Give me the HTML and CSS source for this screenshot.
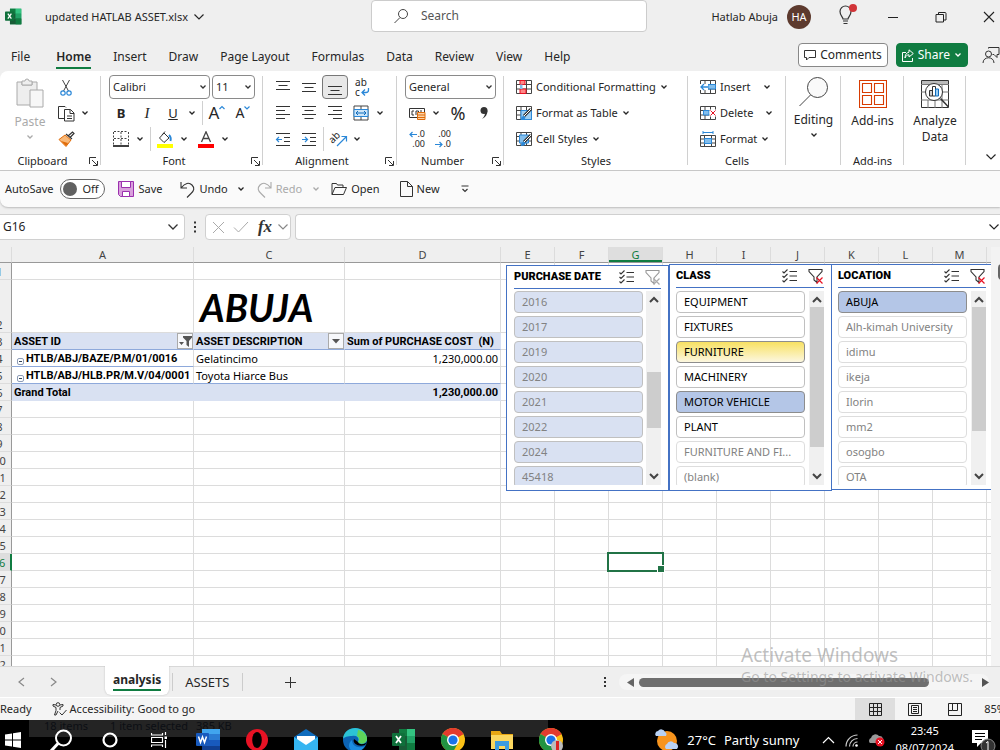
FILE: index.html
```html
<!DOCTYPE html>
<html lang="en">

<head>
    <meta charset="UTF-8">
    <meta name="viewport" content="width=device-width, initial-scale=1.0">
    <title>updated HATLAB ASSET.xlsx</title>
    <link rel="stylesheet" href="styles.css">
</head>

<body>
    <!-- shared icons -->
    <svg class="sprite" width="0" height="0" aria-hidden="true">
        <symbol id="chev" viewBox="0 0 8 6"><path d="M1.5 1.5 4 4l2.5-2.5" fill="none" stroke="currentColor" stroke-width="1.3"/></symbol>
        <symbol id="chev-big" viewBox="0 0 12 8"><path d="M1.5 1.5 6 6l4.5-4.5" fill="none" stroke="currentColor" stroke-width="1.2"/></symbol>
        <symbol id="launch" viewBox="0 0 9 9"><path d="M.5 7V.5H7M3 3l5 5M8.5 4v4.5H4" fill="none" stroke="#333"/></symbol>
        <symbol id="xl" viewBox="0 0 24 24">
            <path d="M7 1h16v22H7z" fill="#21a366"/><path d="M7 1h8v7H7z" fill="#107c41"/><path d="M15 1h8v7h-8z" fill="#33c481"/>
            <path d="M7 8h8v7H7z" fill="#185c37"/><path d="M15 8h8v7h-8z" fill="#21a366"/><path d="M7 15h16v8H7z" fill="#185c37"/><path d="M15 15h8v8h-8z" fill="#107c41"/>
            <rect x="0" y="5" width="13" height="13" rx="1" fill="#0f703b"/>
            <path d="m4 8 5 7M9 8l-5 7" stroke="#fff" stroke-width="1.8"/>
        </symbol>
        <symbol id="multi" viewBox="0 0 15 14"><path d="m.5 2.5 1.500 1.500L5.500.5M.5 7l1.500 1.500L5.500 5M.5 11.500 2 13l3.500-3.500M7.500 2.500H15M7.500 7H15M7.500 11.500H15" fill="none" stroke="#333" stroke-width="1.1"/></symbol>
        <symbol id="funnel" viewBox="0 0 16 15"><path d="M1 .5h13v2L9 8v5.500L6 11V8L1 2.500z" fill="none" stroke="currentColor" stroke-width="1.1"/><path d="m8.500 8.500 6 6M14.500 8.500l-6 6" stroke="var(--funnel-x, #e81123)" stroke-width="1.2"/></symbol>
        <symbol id="chrome" viewBox="0 0 24 24">
            <circle cx="12" cy="12" r="12" fill="#fbc116"/>
            <path d="M12 12 1.600 6A12 12 0 0 1 22.400 6z" fill="#e33b2e"/>
            <path d="M12 12 22.400 6H12z" fill="#e33b2e"/>
            <path d="M12 12 1.600 6A12 12 0 0 0 12 24l5-9z" fill="#229342"/>
            <circle cx="12" cy="12" r="6" fill="#fff"/><circle cx="12" cy="12" r="4.600" fill="#1a73e8"/>
        </symbol>
        <symbol id="tbl" viewBox="0 0 16 16"><path d="M.5 1.500h15v13H.5zM.5 5.500h15M.5 10h15M5 1.500v13M10.500 1.500v13" fill="#fff" stroke="#444"/></symbol>
    </svg>

    <header class="titlebar">
        <div class="title-left">
            <svg width="17" height="17"><use href="#xl"/></svg>
            <button class="file-name">updated HATLAB ASSET.xlsx <svg width="12" height="8"><use href="#chev-big"/></svg></button>
        </div>
        <label class="search">
            <svg width="16" height="16" viewBox="0 0 16 16"><circle cx="10" cy="6" r="4.500" fill="none" stroke="#444"/><path d="m7 9.500-5.500 5.500" stroke="#444"/></svg>
            <input type="text" placeholder="Search" aria-label="Search">
        </label>
        <div class="title-right">
            <span>Hatlab Abuja</span>
            <button class="avatar">HA</button>
            <button class="bulb" aria-label="Tips">
                <svg width="20" height="22" viewBox="0 0 20 22"><path d="M6 15c0-2-3-3.500-3-7.500a5.500 5.500 0 0 1 11 0c0 4-3 5.500-3 7.500zM6 17h5M6.500 19.500h4" fill="none" stroke="#333" stroke-width="1.200"/><circle cx="16" cy="4" r="4" fill="#d13438"/></svg>
            </button>
            <button class="win" aria-label="Minimize"><svg width="12" height="12" viewBox="0 0 12 12"><path d="M1 6.500h10" stroke="#222"/></svg></button>
            <button class="win" aria-label="Restore"><svg width="12" height="12" viewBox="0 0 12 12"><path d="M1 3.500h7.500V11H1zM3.500 3.500V1.500H10a1 1 0 0 1 1 1v6.500H8.500" fill="none" stroke="#222"/></svg></button>
            <button class="win" aria-label="Close"><svg width="12" height="12" viewBox="0 0 12 12"><path d="m1 1 10 10M11 1 1 11" stroke="#222" stroke-width="1.100"/></svg></button>
        </div>
    </header>

    <nav class="tabs">
        <button>File</button>
        <button class="active">Home</button>
        <button>Insert</button>
        <button>Draw</button>
        <button>Page Layout</button>
        <button>Formulas</button>
        <button>Data</button>
        <button>Review</button>
        <button>View</button>
        <button>Help</button>
        <div class="tab-actions">
            <button class="comments"><svg width="12" height="12" viewBox="0 0 12 12"><path d="M.5 1.500h11v7H5L2.500 11V8.500h-2z" fill="none" stroke="#333"/></svg>Comments</button>
            <button class="share"><svg width="12" height="13" viewBox="0 0 12 13"><path d="M4 3.500H.5v9h10V9M7 .8l4.300 3.700L7 8V5.800C5 5.800 3.800 7 3 9c0-3 1.500-5.500 4-5.800z" fill="none" stroke="#fff"/></svg>Share <svg width="8" height="6"><use href="#chev"/></svg></button>
            <button class="people" aria-label="Account"><svg width="18" height="18" viewBox="0 0 18 18"><circle cx="6.500" cy="8" r="3" fill="none" stroke="#333"/><path d="M1 17c0-7 11-7 11 0M6.500 2.500v-1H17v7h-2v3L12 8.500h-1.500" fill="none" stroke="#333"/></svg></button>
        </div>
    </nav>

    <section class="ribbon">
        <div class="group clipboard">
            <div class="clip-body">
                <button class="big disabled">
                    <svg width="28" height="32" viewBox="0 0 28 32"><path d="M1 5h5v3h10V5h5v23H1z" fill="#eee" stroke="#aaa"/><path d="M6 8V4h3a2 2 0 0 1 4 0h3v4z" fill="#eee" stroke="#aaa"/><path d="M14 13h13v17H14z" fill="#f7f7f7" stroke="#aaa"/></svg>
                    Paste
                    <svg width="8" height="6"><use href="#chev"/></svg>
                </button>
                <div class="clip-tools">
                    <div class="row"><button class="ic" aria-label="Cut"><svg width="12" height="17" viewBox="0 0 12 17"><path d="M2.500 1 8.500 12M9.500 1l-6 11" stroke="#444" fill="none"/><circle cx="3" cy="14" r="2.200" fill="none" stroke="#2b88d8" stroke-width="1.200"/><circle cx="9" cy="14" r="2.200" fill="none" stroke="#2b88d8" stroke-width="1.200"/></svg></button></div>
                    <div class="row"><button class="ic" aria-label="Copy"><svg width="17" height="17" viewBox="0 0 17 17"><path d="M6 13.500H.5v-12H7l1 1M6.500 4.500h6L16 8v8H6.500zM12 4.500V8.500h4M9 11h5M9 13.500h5" fill="none" stroke="#333"/></svg></button><button class="dd" aria-label="Copy options"><svg width="8" height="6"><use href="#chev"/></svg></button></div>
                    <div class="row"><button class="ic" aria-label="Format painter"><svg width="17" height="16" viewBox="0 0 17 16"><path d="m7 4 6 5-5 6.500L1 8.500z" fill="#f8b878" stroke="#e06c0a"/><path d="m3 10 5 5 2-3z" fill="#e06c0a"/><path d="m8 3 6 5M10 5l4.500-4 1.500 1.500L12 6.500" fill="#fff" stroke="#333" stroke-width="1.200"/></svg></button></div>
                </div>
            </div>
            <div class="g-label">Clipboard<svg width="9" height="9"><use href="#launch"/></svg></div>
        </div>

        <div class="group font">
            <div class="row">
                <select class="font-name" aria-label="Font"><option>Calibri</option></select>
                <select class="font-size" aria-label="Font size"><option>11</option></select>
            </div>
            <div class="row">
                <button class="ic bold">B</button><button class="ic italic">I</button><button class="ic under">U</button><button class="dd" aria-label="Underline options"><svg width="8" height="6"><use href="#chev"/></svg></button>
                <i class="sep"></i>
                <button class="ic" aria-label="Increase font size"><span class="grow">A</span><svg width="6" height="12" viewBox="0 0 6 12"><path d="m.5 4 2.500-2.500L5.500 4" fill="none" stroke="#2b88d8" stroke-width="1.200"/></svg></button>
                <button class="ic" aria-label="Decrease font size"><span class="shrink">A</span><svg width="6" height="12" viewBox="0 0 6 12"><path d="m.5 1.500 2.500 2.500 2.500-2.500" fill="none" stroke="#2b88d8" stroke-width="1.200"/></svg></button>
            </div>
            <div class="row">
                <button class="ic" aria-label="Borders"><svg width="16" height="16" viewBox="0 0 16 16"><path d="M1 .5h14M.5 1v13M15.500 1v13M8 1v13M1 7.500h14" stroke="#444" stroke-dasharray="2 1.500" fill="none"/><path d="M0 15h16" stroke="#000" stroke-width="1.500"/></svg></button><button class="dd" aria-label="Border options"><svg width="8" height="6"><use href="#chev"/></svg></button>
                <i class="sep"></i>
                <button class="ic" aria-label="Fill colour"><svg width="16" height="17" viewBox="0 0 16 17"><path d="m7 2 5 5-5 4.500L2.500 7zM5 4l3-3.500" fill="#fff" stroke="#333"/><path d="M12 4c2 2 2.500 3 1.500 6" stroke="#2b88d8" fill="none" stroke-width="1.800"/><path d="M0 13h16v4H0z" fill="#ff0"/></svg></button><button class="dd" aria-label="Fill options"><svg width="8" height="6"><use href="#chev"/></svg></button>
                <i class="gap"></i>
                <button class="ic" aria-label="Font colour"><svg width="16" height="17" viewBox="0 0 16 17"><path d="M3.500 11 8 .8 12.500 11M5 7.500h6" fill="none" stroke="#444" stroke-width="1.300"/><path d="M0 13h16v4H0z" fill="#f00"/></svg></button><button class="dd" aria-label="Font colour options"><svg width="8" height="6"><use href="#chev"/></svg></button>
            </div>
            <div class="g-label">Font<svg width="9" height="9"><use href="#launch"/></svg></div>
        </div>

        <div class="group align">
            <div class="row">
                <button class="ic" aria-label="Top align"><svg width="16" height="16" viewBox="0 0 16 16"><path d="M1 2.500h14M3.500 6.500h9M1 10.500h14" stroke="#333"/></svg></button>
                <button class="ic" aria-label="Middle align"><svg width="16" height="16" viewBox="0 0 16 16"><path d="M1 4.500h14M3.500 8.500h9M1 12.500h14" stroke="#333"/></svg></button>
                <button class="ic pressed" aria-label="Bottom align"><svg width="16" height="16" viewBox="0 0 16 16"><path d="M1 7.500h14M3.500 11.500h9M1 15.500h14" stroke="#333"/></svg></button>
                <button class="ic" aria-label="Wrap text"><span class="wrap">ab<br>c</span><svg class="wrap-arrow" width="9" height="8" viewBox="0 0 9 8"><path d="M7.500 0v2Q7.500 4.500 5 4.500H1M4 1.500l-3 3 3 3" fill="none" stroke="#2b88d8" stroke-width="1.300"/></svg></button>
            </div>
            <div class="row">
                <button class="ic" aria-label="Align left"><svg width="16" height="16" viewBox="0 0 16 16"><path d="M1 1.500h14M1 5.500h9M1 9.500h14M1 13.500h9" stroke="#333"/></svg></button>
                <button class="ic" aria-label="Center"><svg width="16" height="16" viewBox="0 0 16 16"><path d="M1 1.500h14M3.500 5.500h9M1 9.500h14M3.500 13.500h9" stroke="#333"/></svg></button>
                <button class="ic" aria-label="Align right"><svg width="16" height="16" viewBox="0 0 16 16"><path d="M1 1.500h14M6 5.500h9M1 9.500h14M6 13.500h9" stroke="#333"/></svg></button>
                <button class="ic" aria-label="Merge"><svg width="16" height="16" viewBox="0 0 16 16"><path d="M1 1h14v14H1zM8 1v14" fill="#fff" stroke="#444"/><path d="M1 4.500h14v7H1z" fill="#cfe6f8" stroke="#2b88d8"/><path d="M3 8h10M5 6 3 8l2 2M11 6l2 2-2 2" fill="none" stroke="#0f6cbd"/></svg></button><button class="dd" aria-label="Merge options"><svg width="8" height="6"><use href="#chev"/></svg></button>
            </div>
            <div class="row">
                <button class="ic" aria-label="Decrease indent"><svg width="16" height="16" viewBox="0 0 16 16"><path d="M1 2.500h14M9 6.500h6M9 10.500h6M1 14.500h14" stroke="#333"/><path d="M7 8.500H1.500M4 6 1.500 8.500 4 11" fill="none" stroke="#2b88d8" stroke-width="1.200"/></svg></button>
                <button class="ic" aria-label="Increase indent"><svg width="16" height="16" viewBox="0 0 16 16"><path d="M1 2.500h14M9 6.500h6M9 10.500h6M1 14.500h14" stroke="#333"/><path d="M1 8.500h5.500M4 6l2.500 2.500L4 11" fill="none" stroke="#2b88d8" stroke-width="1.200"/></svg></button>
                <i class="sep tight"></i>
                <button class="ic" aria-label="Orientation"><span class="orient">ab</span><svg width="12" height="12" viewBox="0 0 12 12"><path d="M1 11 10 2M5.500 1.500h5v5" fill="none" stroke="#2b88d8" stroke-width="1.200"/></svg></button><button class="dd" aria-label="Orientation options"><svg width="8" height="6"><use href="#chev"/></svg></button>
            </div>
            <div class="g-label">Alignment<svg width="9" height="9"><use href="#launch"/></svg></div>
        </div>

        <div class="group number">
            <div class="row"><select class="num-format" aria-label="Number format"><option>General</option></select></div>
            <div class="row">
                <button class="ic" aria-label="Accounting format"><svg width="17" height="16" viewBox="0 0 17 16"><path d="M.5 3.500h15v9H.5z" fill="#fff" stroke="#333"/><path d="M5 6H3v4h2M7 10V6h2.500v4M13 6h-2" fill="none" stroke="#333"/><path d="M8.500 7.500h7.500v7H8.500z" fill="#fbd3a8" stroke="#e06c0a"/><path d="M8.500 10h7.500M8.500 12.500h7.500" stroke="#e06c0a"/></svg></button><button class="dd" aria-label="Accounting options"><svg width="8" height="6"><use href="#chev"/></svg></button>
                <i class="gap"></i>
                <button class="ic percent">%</button><button class="ic" aria-label="Comma style"><svg width="10" height="14" viewBox="0 0 10 14"><circle cx="5" cy="4.500" r="3.500" fill="#333"/><path d="M8.500 4.500c0 4-2 7-5.500 8.500 2-2 3-4 3-6z" fill="#333"/></svg></button>
            </div>
            <div class="row">
                <button class="ic dec" aria-label="Increase decimal"><span><svg width="8" height="7" viewBox="0 0 8 7"><path d="M8 3.500H1M3.500 1 1 3.500 3.500 6" fill="none" stroke="#2b88d8" stroke-width="1.200"/></svg>.0</span><span>.00</span></button>
                <button class="ic dec" aria-label="Decrease decimal"><span>.00</span><span><svg width="8" height="7" viewBox="0 0 8 7"><path d="M0 3.500h7M4.500 1 7 3.500 4.500 6" fill="none" stroke="#2b88d8" stroke-width="1.200"/></svg>.0</span></button>
            </div>
            <div class="g-label">Number<svg width="9" height="9"><use href="#launch"/></svg></div>
        </div>

        <div class="group styles">
            <div class="row"><button class="cmd"><svg width="16" height="16" viewBox="0 0 16 16"><use href="#tbl"/><path d="M4 1.500h5v4H4zM4 10h6v4.500H4z" fill="#f88" stroke="#e81123"/><path d="M4 5.500h2.500V10H4z" fill="#83beec"/></svg>Conditional Formatting <svg width="8" height="6"><use href="#chev"/></svg></button></div>
            <div class="row"><button class="cmd"><svg width="16" height="16" viewBox="0 0 16 16"><use href="#tbl"/><path d="M5 5.500h10.500v9H5z" fill="#9ccdf2" stroke="#2b88d8"/><path d="m15 4-7 7" stroke="#333" stroke-width="3"/><path d="m15 4-7 7" stroke="#fff"/><path d="M5 15q0-4 3-4l1.500 1.500Q9 15 5 15" fill="#2b88d8"/></svg>Format as Table <svg width="8" height="6"><use href="#chev"/></svg></button></div>
            <div class="row"><button class="cmd"><svg width="16" height="16" viewBox="0 0 16 16"><use href="#tbl"/><path d="M3.500 4h9v8h-9z" fill="#83beec" stroke="#2b88d8"/><path d="m15 4-7 7" stroke="#333" stroke-width="3"/><path d="m15 4-7 7" stroke="#fff"/><path d="M5 15q0-4 3-4l1.500 1.500Q9 15 5 15" fill="#2b88d8"/></svg>Cell Styles <svg width="8" height="6"><use href="#chev"/></svg></button></div>
            <div class="g-label">Styles</div>
        </div>

        <div class="group cells">
            <div class="row"><button class="cmd"><svg width="16" height="16" viewBox="0 0 16 16"><use href="#tbl"/><path d="M8 5.500h7.500V10H8z" fill="#83beec" stroke="#2b88d8"/><path d="M0 5h8v6H0z" fill="#fff"/><path d="M8 8H1M4 5 1 8l3 3" fill="none" stroke="#2b88d8" stroke-width="1.300"/></svg>Insert <svg class="far" width="8" height="6"><use href="#chev"/></svg></button></div>
            <div class="row"><button class="cmd"><svg width="16" height="16" viewBox="0 0 16 16"><use href="#tbl"/><path d="M3.500 5.500H9V10H3.500z" fill="#83beec" stroke="#2b88d8"/><path d="M9.500 4.500H16v7H9.500z" fill="#fff"/><path d="m10.500 5.500 5 5M15.500 5.500l-5 5" stroke="#e81123"/></svg>Delete <svg class="far" width="8" height="6"><use href="#chev"/></svg></button></div>
            <div class="row"><button class="cmd"><svg width="16" height="16" viewBox="0 0 16 16"><path d="M.5 4.500h15v11H.5zM.5 8h15M.5 12h15M4.500 4.500v11M11.500 4.500v11" fill="#fff" stroke="#444"/><path d="M4.500 7.500h7v5h-7z" fill="#83beec" stroke="#2b88d8"/><path d="M3 1.500h10M3 0v3M13 0v3" stroke="#2b88d8"/></svg>Format <svg width="8" height="6"><use href="#chev"/></svg></button></div>
            <div class="g-label">Cells</div>
        </div>

        <div class="group editing">
            <button class="big">
                <svg width="30" height="30" viewBox="0 0 30 30"><circle cx="18.500" cy="10.500" r="10" fill="#fafafa" stroke="#444"/><path d="M11.500 18 .5 29" stroke="#444"/></svg>
                Editing
                <svg width="8" height="6"><use href="#chev"/></svg>
            </button>
        </div>
        <div class="group addins">
            <button class="big">
                <svg width="28" height="28" viewBox="0 0 28 28"><path d="M.5.5h27v27H.5zM3.500 3.500h9v9h-9zM15.500 3.500h9v9h-9zM3.500 15.500h9v9h-9zM15.500 15.500h9v9h-9z" fill="none" stroke="#d83b01" stroke-width="1.100"/></svg>
                Add-ins
            </button>
            <div class="g-label">Add-ins</div>
        </div>
        <div class="group analyze">
            <button class="big">
                <svg width="28" height="28" viewBox="0 0 28 28"><path d="M.5.5h27v27H.5z" fill="#fff" stroke="#333"/><path d="M1 1h26v3H1z" fill="#bbb"/><path d="M0 4.500h28M0 12h28M0 20h28M7 20v8M14 20v8M21 4v24" stroke="#777"/><circle cx="13" cy="12" r="8.500" fill="#fff" stroke="#333"/><path d="m19.500 18.500 8 8.500" stroke="#333" stroke-width="1.500"/><path d="M8.500 10.500h3V16h-3z" fill="#ccc" stroke="#333"/><path d="M11.500 6.500h3V16h-3z" fill="#fff" stroke="#333"/><path d="M14.500 9h3v7h-3z" fill="#9ccdf2" stroke="#0f6cbd"/></svg>
                Analyze<br>Data
            </button>
        </div>
        <button class="collapse" aria-label="Collapse ribbon"><svg width="12" height="8"><use href="#chev-big"/></svg></button>
    </section>

    <section class="qat">
        <label class="autosave">AutoSave <span class="toggle"><input type="checkbox" role="switch"><i></i>Off</span></label>
        <button class="save"><svg width="16" height="16" viewBox="0 0 16 16"><path d="M.5.5h15v15h-13l-2-2z" fill="#d9a0dc" stroke="#9b2fae"/><path d="M3.500.5h9v6h-9zM4.500 10.500h7v5h-7z" fill="#fff" stroke="#9b2fae"/></svg>Save</button>
        <button class="undo"><svg width="15" height="17" viewBox="0 0 15 17"><path d="M1 1v6h6M1.500 6.500C5 2 9 1 12 4s2 6-1 8.500L7 16.500" fill="none" stroke="#333" stroke-width="1.100"/></svg>Undo</button>
        <button class="dd" aria-label="Undo options"><svg width="8" height="6"><use href="#chev"/></svg></button>
        <button class="redo disabled"><svg width="15" height="17" viewBox="0 0 15 17"><path d="M14 1v6H8M13.500 6.500C10 2 6 1 3 4s-2 6 1 8.500l4 4" fill="none" stroke="#aaa" stroke-width="1.100"/></svg>Redo</button>
        <button class="dd disabled" aria-label="Redo options"><svg width="8" height="6"><use href="#chev"/></svg></button>
        <button class="open"><svg width="16" height="12" viewBox="0 0 16 12"><path d="M1 11.500V.5h4.500l1 1.500H12v2.500M1 11.500 4 4.500h11.500l-3 7z" fill="none" stroke="#333"/></svg>Open</button>
        <button class="new"><svg width="13" height="16" viewBox="0 0 13 16"><path d="M.5.5h7l5 5v10H.5zM7.500.5v5h5" fill="none" stroke="#333"/></svg>New</button>
        <button class="custom" aria-label="Customize toolbar"><svg width="8" height="8" viewBox="0 0 8 8"><path d="M.5 1h7M1.500 4 4 6.500 6.500 4" fill="none" stroke="#333" stroke-width="1.200"/></svg></button>
    </section>

    <section class="formula-bar">
        <select class="name-box" aria-label="Name box"><option>G16</option></select>
        <svg width="4" height="14" viewBox="0 0 4 14"><path d="M1 1.500h2v2H1zM1 6h2v2H1zM1 10.500h2v2H1z" fill="#333"/></svg>
        <div class="fx">
            <button aria-label="Cancel"><svg width="13" height="13" viewBox="0 0 13 13"><path d="m1 1 11 11M12 1 1 12" stroke="#aaa"/></svg></button>
            <button aria-label="Enter"><svg width="16" height="12" viewBox="0 0 16 12"><path d="m1 6.500 4.500 4.500L15 1" fill="none" stroke="#aaa"/></svg></button>
            <button class="fx-btn">fx</button>
            <button aria-label="Function list"><svg width="12" height="8"><use href="#chev-big"/></svg></button>
        </div>
        <div class="formula">
            <input type="text" aria-label="Formula">
            <button aria-label="Expand formula bar"><svg width="12" height="8"><use href="#chev-big"/></svg></button>
        </div>
    </section>

    <main class="work">
        <div class="sheet">
            <table id="grid">
                <colgroup>
                    <col class="w-head"><col class="w-a"><col class="w-c"><col class="w-d">
                    <col span="10" class="w-std">
                </colgroup>
                <thead>
                    <tr><th class="corner"></th><th>A</th><th>C</th><th>D</th><th>E</th><th>F</th><th class="sel">G</th><th>H</th><th>I</th><th>J</th><th>K</th><th>L</th><th>M</th><th></th></tr>
                </thead>
                <tbody>
                    <tr><th>1</th></tr>
                    <tr class="title-row"><th>2</th><td></td><td class="city">ABUJA</td></tr>
                    <tr class="pivot-head">
                        <th>3</th>
                        <td><div>ASSET ID<button class="filter" aria-label="Filter asset ID"><svg width="13" height="11" viewBox="0 0 13 11"><path d="M4 0h9v1.500L10 5v6L7.500 9V5L4 1.500zM0 6h5L2.500 9z" fill="#555"/></svg></button></div></td>
                        <td><div>ASSET DESCRIPTION<button class="filter" aria-label="Filter description"><svg width="8" height="5" viewBox="0 0 8 5"><path d="M0 0h8L4 4.500z" fill="#555"/></svg></button></div></td>
                        <td>Sum of PURCHASE COST&nbsp; (N)</td>
                    </tr>
                    <tr><th>4</th><td class="asset"><button class="minus" aria-label="Collapse"></button>HTLB/ABJ/BAZE/P.M/01/0016</td><td>Gelatincimo</td><td class="num">1,230,000.00</td></tr>
                    <tr class="last"><th>5</th><td class="asset"><button class="minus" aria-label="Collapse"></button>HTLB/ABJ/HLB.PR/M.V/04/0001</td><td>Toyota Hiarce Bus</td><td></td></tr>
                    <tr class="total"><th>6</th><td>Grand Total</td><td></td><td class="num">1,230,000.00</td></tr>
                </tbody>
            </table>

            <div class="slicer s-date">
                <div class="s-head"><b>PURCHASE DATE</b><button aria-label="Multi-select"><svg width="15" height="14"><use href="#multi"/></svg></button><button class="clear off" aria-label="Clear filter"><svg width="16" height="15"><use href="#funnel"/></svg></button></div>
                <div class="s-body">
                    <div class="s-list">
                        <button class="soft">2016</button><button class="soft">2017</button><button class="soft">2019</button><button class="soft">2020</button>
                        <button class="soft">2021</button><button class="soft">2022</button><button class="soft">2024</button><button class="soft">45418</button>
                    </div>
                    <div class="s-bar"><svg width="10" height="7" viewBox="0 0 10 7"><path d="M1 6l4-4 4 4" fill="none" stroke="#444" stroke-width="2"/></svg><i></i><svg width="10" height="7" viewBox="0 0 10 7"><path d="M1 1l4 4 4-4" fill="none" stroke="#444" stroke-width="2"/></svg></div>
                </div>
            </div>
            <div class="slicer s-class">
                <div class="s-head"><b>CLASS</b><button aria-label="Multi-select"><svg width="15" height="14"><use href="#multi"/></svg></button><button class="clear" aria-label="Clear filter"><svg width="16" height="15"><use href="#funnel"/></svg></button></div>
                <div class="s-body">
                    <div class="s-list">
                        <button>EQUIPMENT</button><button>FIXTURES</button><button class="hover">FURNITURE</button><button>MACHINERY</button>
                        <button class="on">MOTOR VEHICLE</button><button>PLANT</button><button class="none">FURNITURE AND FI...</button><button class="none">(blank)</button>
                    </div>
                    <div class="s-bar"><svg width="10" height="7" viewBox="0 0 10 7"><path d="M1 6l4-4 4 4" fill="none" stroke="#444" stroke-width="2"/></svg><i></i><svg width="10" height="7" viewBox="0 0 10 7"><path d="M1 1l4 4 4-4" fill="none" stroke="#444" stroke-width="2"/></svg></div>
                </div>
            </div>
            <div class="slicer s-location">
                <div class="s-head"><b>LOCATION</b><button aria-label="Multi-select"><svg width="15" height="14"><use href="#multi"/></svg></button><button class="clear" aria-label="Clear filter"><svg width="16" height="15"><use href="#funnel"/></svg></button></div>
                <div class="s-body">
                    <div class="s-list">
                        <button class="on">ABUJA</button><button class="none">Alh-kimah University</button><button class="none">idimu</button><button class="none">ikeja</button>
                        <button class="none">Ilorin</button><button class="none">mm2</button><button class="none">osogbo</button><button class="none">OTA</button>
                    </div>
                    <div class="s-bar"><svg width="10" height="7" viewBox="0 0 10 7"><path d="M1 6l4-4 4 4" fill="none" stroke="#444" stroke-width="2"/></svg><i></i><svg width="10" height="7" viewBox="0 0 10 7"><path d="M1 1l4 4 4-4" fill="none" stroke="#444" stroke-width="2"/></svg></div>
                </div>
            </div>
        </div>
        <div class="v-scroll"><i></i></div>
    </main>

    <section class="sheet-tabs">
        <button class="nav" aria-label="Previous sheet"><svg width="8" height="10" viewBox="0 0 8 10"><path d="M7 1 2 5l5 4" fill="none" stroke="#888" stroke-width="1.200"/></svg></button>
        <button class="nav" aria-label="Next sheet"><svg width="8" height="10" viewBox="0 0 8 10"><path d="m1 1 5 4-5 4" fill="none" stroke="#888" stroke-width="1.200"/></svg></button>
        <button class="tab active"><span>analysis</span></button>
        <button class="tab">ASSETS</button>
        <button class="add" aria-label="New sheet"><svg width="11" height="11" viewBox="0 0 11 11"><path d="M0 5.500h11M5.500 0v11" stroke="#333"/></svg></button>
        <svg class="dots" width="4" height="12" viewBox="0 0 4 12"><path d="M1 1h2v2H1zM1 5h2v2H1zM1 9h2v2H1z" fill="#333"/></svg>
        <div class="h-scroll">
            <svg width="7" height="9" viewBox="0 0 7 9"><path d="M7 0v9L0 4.500z" fill="#666"/></svg>
            <i></i>
            <svg width="7" height="9" viewBox="0 0 7 9"><path d="M0 0v9l7-4.500z" fill="#555"/></svg>
        </div>
    </section>

    <footer class="status">
        <span>Ready</span>
        <button class="access"><svg width="15" height="14" viewBox="0 0 15 14"><circle cx="6" cy="2.500" r="1.800" fill="none" stroke="#333"/><path d="M4 3 1 2.500v1.500l3 1.500v3L2.500 13H4l2-4M8 3l3-.5V4L8 5.500V8M7.500 10.500 10 13l4.500-5" fill="none" stroke="#333"/></svg>Accessibility: Good to go</button>
        <div class="views">
            <button class="on" aria-label="Normal view"><svg width="13" height="13" viewBox="0 0 13 13"><path d="M.5.5h12v12H.5zM.5 4.500h12M.5 8.500h12M4.500.5v12M8.500.5v12" fill="none" stroke="#222"/></svg></button>
            <button aria-label="Page layout"><svg width="14" height="13" viewBox="0 0 14 13"><path d="M.5.5h13v12H.5zM3.500 2.500h7v8h-7zM5 4.500h4M5 6.500h4M5 8.500h4" fill="none" stroke="#222"/></svg></button>
            <button aria-label="Page break"><svg width="14" height="13" viewBox="0 0 14 13"><path d="M.5.5h13v12H.5zM4.500.5v7h-4M9.500.5v7h-5" fill="none" stroke="#222"/></svg></button>
            <span class="zoom">85%</span>
        </div>
    </footer>

    <footer class="taskbar">
        <div class="ghost"><span>18 items</span><span>1 item selected</span><span>385 KB</span></div>
        <div class="apps">
            <button aria-label="Start"><svg width="16" height="16" viewBox="0 0 16 16"><path d="M0 2.500 7 1.500V7.500H0zM8 1.300 16 0v7.500H8zM0 8.500h7v6L0 13.500zM8 8.500h8V16l-8-1.300z" fill="#fff"/></svg></button>
            <button aria-label="Search"><svg width="24" height="24" viewBox="0 0 24 24"><circle cx="14.500" cy="10" r="7.500" fill="none" stroke="#fff" stroke-width="2"/><path d="m9 15.500-7 7.500" stroke="#fff" stroke-width="3"/></svg></button>
            <button aria-label="Cortana"><svg width="16" height="16" viewBox="0 0 16 16"><circle cx="8" cy="8" r="6.500" fill="none" stroke="#fff" stroke-width="2.200"/></svg></button>
            <button aria-label="Task view"><svg width="16" height="16" viewBox="0 0 16 16"><path d="M.5 1V3h11V1M.5 15v-2h11v2M.5 5.500h11v5H.5zM14.500 0v3M14.500 8v8" fill="none" stroke="#fff" stroke-width="1.200"/><path d="M13.500 4.500h2.500V7h-2.500z" fill="#fff"/></svg></button>
            <button aria-label="Word"><svg width="24" height="24" viewBox="0 0 24 24"><path d="M6 1h18v6H6z" fill="#41a5ee"/><path d="M6 6h18v6H6z" fill="#2b7cd3"/><path d="M6 12h18v6H6z" fill="#185abd"/><path d="M6 18h18v5H6z" fill="#103f91"/><rect y="5" width="13" height="13" rx="1" fill="#185abd"/><path d="m2.500 8.500 2 6 2-5.500 2 5.500 2-6" fill="none" stroke="#fff" stroke-width="1.500"/></svg></button>
            <button aria-label="Opera"><svg width="24" height="24" viewBox="0 0 24 24"><circle cx="12" cy="12" r="11" fill="#e81224"/><ellipse cx="12" cy="12" rx="4.800" ry="8" fill="#000"/></svg></button>
            <button aria-label="Mail"><svg width="24" height="24" viewBox="0 0 24 24"><path d="M0 9 12 1l12 8v14H0z" fill="#0f6cbd"/><path d="M3 8h18v9H3z" fill="#fff"/><path d="m0 9 12 8 12-8v14H0z" fill="#35b5f1"/></svg></button>
            <button aria-label="Edge"><svg width="24" height="24" viewBox="0 0 24 24"><circle cx="12" cy="12" r="12" fill="#0c63b4"/><path d="M0 11C1-3 23-4 24 11c0 5-7 6-9 3 2-5-2-7-6-6-4 0-8 1-9 3z" fill="#2cc3d5"/><path d="M15 2c6 1 9 5 9 9 0 5-7 6-9 3 2-3 1-5-1-6z" fill="#5fd45a"/><path d="M9 12c0 6 6 9 13 6-3 5-9 7-13 5-4-3-4-8 0-11z" fill="#1b8ce0"/><path d="M11 11c-2 5 5 8 11 6l2-3c-3 3-8 3-9 0z" fill="#000"/></svg></button>
            <button aria-label="Excel"><svg width="24" height="24"><use href="#xl"/></svg></button>
            <button aria-label="Chrome"><svg width="24" height="24"><use href="#chrome"/></svg></button>
            <button aria-label="File Explorer"><svg width="24" height="24" viewBox="0 0 24 24"><path d="M1 3h9l2 3h11v15H1z" fill="#e8a713"/><path d="M1 7h22v14H1z" fill="#fbd75f"/><path d="M5 13h14v10h-4v-5H9v5H5z" fill="#3a9be0"/></svg></button>
            <button aria-label="Chrome profile"><svg width="24" height="24" viewBox="0 0 24 24"><use href="#chrome"/><circle cx="18" cy="18" r="6" fill="#bbb"/><path d="M17 13h3v9h-3z" fill="#d22"/></svg></button>
        </div>
        <div class="tray">
            <button class="weather"><svg width="25" height="24" viewBox="0 0 25 24"><circle cx="13" cy="13" r="10" fill="#f7941d"/><path d="M2 8a3 3 0 0 1 2-5 4 4 0 0 1 7 1 3 3 0 0 1 1 4zM12 21a3 3 0 0 1 1-5 4 4 0 0 1 7-1 3.500 3.500 0 0 1 3 6z" fill="#b9d2f5"/></svg><span>27°C</span><span>Partly sunny</span></button>
            <button aria-label="Hidden icons"><svg width="13" height="8" viewBox="0 0 13 8"><path d="m1 7 5.500-5.500L12 7" fill="none" stroke="#fff" stroke-width="1.200"/></svg></button>
            <button aria-label="Network"><svg width="13" height="13" viewBox="0 0 13 13"><path d="M1 12.500A11.500 11.500 0 0 1 12.500 1M4.500 12.500a8 8 0 0 1 8-8M8 12.500A4.500 4.500 0 0 1 12.500 8" fill="none" stroke="#ccc" stroke-width="1.200"/><circle cx="11.500" cy="11.500" r="1.300" fill="#fff"/></svg></button>
            <button aria-label="OneDrive"><svg width="17" height="14" viewBox="0 0 17 14"><path d="M2 10a3 3 0 0 1 1-5 4.500 4.500 0 0 1 8-2 4 4 0 0 1 3 7z" fill="#999"/><circle cx="12" cy="9" r="4.500" fill="#e81123"/><path d="m10 7 4 4M14 7l-4 4" stroke="#fff"/></svg></button>
            <div class="clock">23:45<br>08/07/2024</div>
            <button class="notes" aria-label="Notifications"><svg width="24" height="22" viewBox="0 0 24 22"><path d="M0 1h16v13H9l-4 4v-4H0z" fill="#fff"/><path d="M3 4.500h10M3 7.500h10M3 10.500h7" stroke="#000"/><circle cx="16" cy="17" r="7" fill="#333" stroke="#888"/><path d="m14 14 2-1.500V21" fill="none" stroke="#fff"/></svg></button>
        </div>
    </footer>

    <div class="watermark"><p class="big-mark">Activate Windows</p><p>Go to Settings to activate Windows.</p></div>

    <script>
        // fill the grid with empty cells up to column N and row 22
        const body = document.querySelector('#grid tbody');
        for (let r = 1; r <= 22; r++) {
            let row = body.rows[r - 1];
            if (!row) {
                row = body.insertRow();
                const th = document.createElement('th');
                th.textContent = r;
                row.appendChild(th);
            }
            while (row.cells.length < 14) {
                row.insertCell();
            }
        }
        // active cell G16
        body.rows[15].classList.add('sel-row');
        body.rows[15].cells[6].classList.add('active-cell');
    </script>
</body>

</html>
```
FILE: styles.css
```css
* {
    box-sizing: border-box;
}

body {
    margin: 0;
    height: 100vh;
    display: flex;
    flex-direction: column;
    overflow: hidden;
    background-color: #efefef;
    color: #262626;
    font-family: "Noto Sans", "Open Sans", sans-serif;
    font-size: 11px;
    line-height: 16px;
}

button,
input,
select {
    font: inherit;
    color: inherit;
    background: none;
    border: none;
    padding: 0;
    margin: 0;
}

button {
    display: flex;
    align-items: center;
    justify-content: center;
    white-space: nowrap;
}

svg {
    display: block;
    flex: none;
}

.sprite {
    position: absolute;
}

.disabled {
    color: #aaa;
}

/* title bar */
.titlebar {
    display: grid;
    grid-template-columns: 37% 28% 1fr;
    height: 33px;
    flex: none;
}

.title-left {
    display: flex;
    align-items: center;
    gap: 23px;
    padding-left: 5px;
}

.file-name {
    gap: 5px;
}

.search {
    display: flex;
    align-items: center;
    gap: 12px;
    padding-left: 21px;
    margin: 0 3px 1px 1px;
    background-color: #fff;
    border: 1px solid #ccc;
    border-radius: 4px;
    font-size: 12px;
}

.search input {
    flex: 1;
    min-width: 0;
    outline: none;
}

.search input::placeholder {
    color: #555;
}

.title-right {
    display: flex;
    align-items: center;
    justify-content: flex-end;
    padding-right: 5px;
}

.avatar {
    width: 24px;
    height: 24px;
    margin: 0 26px 0 9px;
    border-radius: 50%;
    background-color: #5d3a2e;
    color: #fff;
}

.bulb {
    margin: 0 30px 3px 0;
}

.win {
    margin-left: 36px;
}

.bulb + .win {
    margin-left: 0;
}

/* ribbon tabs */
.tabs {
    display: flex;
    align-items: center;
    gap: 22px;
    height: 38px;
    padding: 9px 0 0 11px;
    flex: none;
    font-size: 12px;
}

.tabs > button {
    height: 24px;
}

.tabs > button:first-child {
    margin-right: 4px;
}

.tabs .active {
    font-weight: 600;
    box-shadow: inset 0 -2px #107c41;
}

.tab-actions {
    display: flex;
    align-items: center;
    gap: 8px;
    margin-left: auto;
    padding-bottom: 3px;
}

.comments,
.share {
    height: 24px;
    gap: 4px;
    padding: 0 5px;
    border-radius: 4px;
    border: 1px solid #888;
    background-color: #fff;
}

.share {
    background-color: #107c41;
    border-color: #107c41;
    color: #fff;
}

.people {
    margin-left: 6px;
}

/* ribbon */
.ribbon {
    display: flex;
    height: 100px;
    flex: none;
    background-color: #fff;
    border-bottom: 1px solid #c8c8c8;
    border-radius: 8px 0 0 0;
}

.group {
    position: relative;
    display: flex;
    flex-direction: column;
    flex: none;
    padding: 3px 7px 0;
}

.group::after {
    content: "";
    position: absolute;
    right: 0;
    top: 5px;
    bottom: 5px;
    border-right: 1px solid #d0d0d0;
}

.clipboard { width: 101px; }
.font { width: 162px; }
.align { width: 134px; }
.number { width: 107px; }
.styles { width: 184px; }
.cells { width: 98px; }
.editing { width: 55px; }
.addins { width: 63px; }
.analyze { width: 62px; }

.row {
    display: flex;
    align-items: center;
    height: 26px;
}

.g-label {
    display: flex;
    justify-content: center;
    align-items: center;
    height: 18px;
    margin-top: auto;
}

.g-label svg {
    position: absolute;
    right: 3px;
    bottom: 4px;
}

.clipboard .g-label,
.font .g-label,
.align .g-label,
.number .g-label {
    padding-right: 16px;
}

.clip-body {
    display: flex;
}

.ic {
    position: relative;
    width: 26px;
    height: 24px;
}

.dd {
    width: 12px;
    height: 24px;
}

.sep {
    width: 1px;
    height: 24px;
    margin: 0 1px 0 4px;
    background-color: #d0d0d0;
}

.sep.tight {
    margin: 0 1px;
}

.gap {
    width: 3px;
}

.big {
    flex-direction: column;
    justify-content: flex-start;
    align-self: center;
    padding-top: 6px;
    font-size: 12px;
    text-align: center;
    white-space: normal;
}

.big svg:first-child {
    margin-bottom: 5px;
}

.clipboard .big {
    width: 46px;
    align-self: flex-start;
    padding-top: 3px;
}

.clipboard .big svg:last-child,
.editing .big svg:last-child {
    margin-top: 4px;
}

.editing .big {
    padding-top: 3px;
}

select {
    appearance: none;
    height: 24px;
    padding: 0 3px;
    border: 1px solid #8a8a8a;
    border-radius: 4px;
    background: #fff url("data:image/svg+xml,%3Csvg xmlns='http://www.w3.org/2000/svg' width='8' height='6'%3E%3Cpath d='M1.5 1.5 4 4l2.5-2.5' fill='none' stroke='%23333' stroke-width='1.3'/%3E%3C/svg%3E") no-repeat right 2px center;
}

.font-name {
    width: 101px;
    margin: 0 2px 0 1px;
}

.font-size {
    width: 43px;
}

.num-format {
    width: 91px;
    margin-left: 1px;
}

.bold {
    font-size: 13px;
    font-weight: 700;
}

.italic {
    font: italic 15px "Liberation Serif", serif;
}

.under {
    font-size: 13px;
    text-decoration: underline;
}

.grow {
    font-size: 17px;
}

.shrink {
    font-size: 14px;
}

.grow + svg,
.shrink + svg {
    margin-bottom: 4px;
}

.pressed {
    border: 1px solid #777;
    border-radius: 4px;
    background-color: #e8e8e8;
}

.wrap {
    font-size: 10px;
    line-height: 10px;
    text-align: left;
}

.wrap-arrow {
    position: absolute;
    right: 4px;
    bottom: 3px;
}

.orient {
    position: absolute;
    left: 3px;
    top: 2px;
    font-size: 10px;
    transform: rotate(-45deg);
}

.orient + svg {
    margin: 4px 0 0 8px;
}

.percent {
    font-size: 18px;
}

.dec {
    flex-direction: column;
    align-items: flex-end;
    padding-right: 5px;
    font-size: 9px;
    line-height: 10px;
}

.dec span {
    display: flex;
    align-items: center;
}

.cmd {
    gap: 4px;
    padding-left: 5px;
}

.far {
    margin-left: 8px;
}

.collapse {
    margin: auto 3px 9px auto;
}

/* quick access toolbar */
.qat {
    display: flex;
    align-items: center;
    height: 36px;
    padding-left: 5px;
    flex: none;
    background-color: #fafafa;
    border-radius: 0 0 0 8px;
    box-shadow: 0 1px 2px #bbb;
}

.qat button {
    gap: 4px;
}

.autosave,
.toggle {
    display: flex;
    align-items: center;
}

.autosave {
    gap: 7px;
}

.toggle {
    width: 45px;
    height: 20px;
    padding-left: 2px;
    gap: 5px;
    border: 1px solid #666;
    border-radius: 10px;
    background-color: #fff;
}

.toggle input {
    position: absolute;
    opacity: 0;
}

.toggle i {
    width: 14px;
    height: 14px;
    border-radius: 50%;
    background-color: #616161;
}

.save {
    margin-left: 13px;
}

.undo {
    margin: 0 7px 0 18px;
}

.redo {
    margin: 0 8px 0 10px;
}

.open {
    margin-left: 9px;
}

.new {
    margin: 0 21px 0 20px;
}

/* formula bar */
.formula-bar {
    display: flex;
    align-items: center;
    gap: 4px;
    height: 40px;
    flex: none;
}

.name-box,
.fx,
.formula {
    height: 26px;
    background-color: #fff;
    border: 1px solid #d0d0d0;
    border-radius: 4px;
}

.name-box {
    width: 185px;
    margin-right: 4px;
    border-left: none;
    border-radius: 0 4px 4px 0;
    font-size: 12px;
    background-image: url("data:image/svg+xml,%3Csvg xmlns='http://www.w3.org/2000/svg' width='12' height='8'%3E%3Cpath d='M1.5 1.5 6 6l4.5-4.5' fill='none' stroke='%23333' stroke-width='1.3'/%3E%3C/svg%3E");
    background-position: right 5px center;
}

.fx {
    display: flex;
    align-items: center;
    gap: 8px;
    padding: 0 1px 0 6px;
    margin-left: 4px;
    color: #888;
}

.fx-btn {
    width: 16px;
    color: #333;
    font: italic 700 17px "Liberation Serif", serif;
}

.fx-btn + button {
    margin-left: -4px;
}

.formula {
    flex: 1;
    display: flex;
    border-right: none;
    border-radius: 4px 0 0 4px;
}

.formula input {
    flex: 1;
    min-width: 0;
    padding: 0 6px;
    outline: none;
}

/* worksheet */
.work {
    display: flex;
    flex: 1;
    min-height: 0;
}

.sheet {
    position: relative;
    flex: 1;
    overflow: hidden;
    background-color: #fff;
    color: #000;
}

/* the row numbers are half scrolled out of the window */
#grid {
    margin-left: -12px;
    width: 1053px;
    table-layout: fixed;
    border-collapse: separate;
    border-spacing: 0;
    line-height: 15px;
}

.w-head { width: 24px; }
.w-a { width: 182px; }
.w-c { width: 151px; }
.w-d { width: 156px; }
.w-std { width: 54px; }

#grid td,
#grid th {
    height: 17px;
    padding: 0 2px;
    border-right: 1px solid #dcdcdc;
    border-bottom: 1px solid #dcdcdc;
    white-space: nowrap;
    vertical-align: bottom;
}

#grid th {
    padding: 0;
    background-color: #efefef;
    color: #444;
    font-weight: 400;
}

#grid thead th {
    height: 16px;
    border-bottom-color: #999;
}

#grid tbody th {
    border-right-color: #999;
}

#grid thead .sel {
    background-color: #dedede;
    color: #107c41;
    box-shadow: inset 0 -2px #107c41;
}

#grid .sel-row th {
    background-color: #dedede;
    color: #107c41;
    border-right: 2px solid #107c41;
}

#grid .title-row td,
#grid .title-row th {
    height: 53px;
}

#grid .city {
    padding: 0 6px;
    font: italic 700 38px/50px Lato, sans-serif;
}

.pivot-head td:nth-child(-n+4),
.total td:nth-child(-n+4),
.asset,
.s-head {
    font-family: Roboto, "Liberation Sans", sans-serif;
    font-weight: 700;
}

.pivot-head td:nth-child(-n+4),
.total td:nth-child(-n+4) {
    background-color: #d9e1f2;
}

#grid .pivot-head td:nth-child(-n+4),
#grid .last td:nth-child(-n+4),
#grid .asset {
    border-bottom-color: #8ea9db;
}

#grid .pivot-head td:nth-child(-n+4),
#grid .total td:nth-child(-n+4) {
    border-right-color: #d9e1f2;
}

#grid .total td:nth-child(-n+4) {
    border-bottom-color: #d9e1f2;
}

.pivot-head td div {
    display: flex;
    align-items: center;
    justify-content: space-between;
    height: 16px;
    margin-right: -2px;
}

.filter {
    width: 16px;
    height: 16px;
    border: 1px solid #aaa;
    background-color: #f7f8fb;
}

.minus {
    display: inline-flex;
    width: 7px;
    height: 7px;
    margin: 0 2px 0 3px;
    border: 1px solid #8e9db8;
    border-radius: 2px;
    vertical-align: 0;
}

.minus::before {
    content: "";
    width: 3px;
    height: 1px;
    background-color: #345;
}

#grid .num {
    text-align: right;
}

#grid .active-cell {
    position: relative;
}

.active-cell::before {
    content: "";
    position: absolute;
    inset: -2px;
    border: 2px solid #217346;
}

.active-cell::after {
    content: "";
    position: absolute;
    right: -3px;
    bottom: -3px;
    width: 6px;
    height: 6px;
    background-color: #217346;
    border: 1px solid #fff;
}

/* slicers float over the cells */
.slicer {
    position: absolute;
    top: 17px;
    width: 163px;
    height: 227px;
    padding: 0 7px 0 6px;
    background-color: #fff;
    border: 1px solid #4472c4;
}

.s-date {
    left: 506px;
    top: 18px;
    height: 226px;
    padding-left: 7px;
}

.s-class {
    left: 669px;
}

.s-location {
    left: 831px;
    height: 226px;
}

.s-head {
    display: flex;
    align-items: center;
    gap: 11px;
    height: 23px;
    border-bottom: 1px solid #4472c4;
    white-space: nowrap;
}

.s-head b {
    flex: 1;
}

.clear {
    color: #333;
}

.clear.off {
    color: #999;
    --funnel-x: #aaa;
}

.s-body {
    display: flex;
    gap: 4px;
    height: 194px;
    margin-top: 3px;
    overflow: hidden;
}

.s-date .s-body {
    margin-top: 2px;
    gap: 3px;
}

.s-list {
    flex: 1;
    display: flex;
    flex-direction: column;
    gap: 3px;
}

.s-list button {
    justify-content: flex-start;
    flex: none;
    height: 22px;
    padding-left: 7px;
    border: 1px solid #c0c0c0;
    border-radius: 4px;
}

.s-list .soft {
    background-color: #d9e1f2;
    color: #828282;
}

.s-list .none {
    color: #828282;
    border-color: #ddd;
}

.s-list .on {
    background-color: #b4c6e7;
    border-color: #8d8d8d;
}

.s-list .hover {
    background: linear-gradient(#f8e162, #fcf7e0);
    border-color: #8d8d8d;
}

.s-bar {
    display: flex;
    flex-direction: column;
    align-items: center;
    width: 15px;
    padding: 5px 0;
    background-color: #f0f0f0;
}

.s-bar i {
    width: 14px;
    height: 140px;
    margin: 4px 0 auto;
    background-color: #cdcdcd;
}

.s-date .s-bar i {
    height: 56px;
    margin-top: 69px;
}

.s-location .s-bar i {
    height: 124px;
}

.v-scroll {
    width: 9px;
    overflow: hidden;
    background-color: #f3f3f3;
}

.v-scroll i {
    display: block;
    width: 8px;
    height: 16px;
    margin: 17px 0 0 7px;
    border-radius: 4px;
    background-color: #666;
}

/* sheet tabs */
.sheet-tabs {
    display: flex;
    align-items: center;
    height: 32px;
    flex: none;
    border-top: 1px solid #d8d8d8;
    border-bottom: 1px solid #fff;
    font-size: 13px;
}

.nav {
    width: 33px;
}

.nav:first-child {
    margin-left: 4px;
}

.tab {
    height: 18px;
    padding: 0 13px 0 12px;
    margin-left: 3px;
    border-left: 1px solid #ccc;
    border-right: 1px solid #ccc;
}

.tab.active {
    align-self: flex-start;
    height: 29px;
    margin: -1px 0 0 35px;
    padding: 0 8px;
    border: none;
    border-radius: 0 0 6px 6px;
    background-color: #fff;
    box-shadow: 0 0 2px #bbb;
    font-size: 12px;
    font-weight: 700;
    clip-path: inset(0 -3px -3px);
}

.tab.active span {
    padding: 2px 0 1px;
    border-bottom: 2px solid #107c41;
}

.add {
    margin-left: 42px;
}

.dots {
    margin-left: auto;
}

.h-scroll {
    display: flex;
    align-items: center;
    width: 37%;
    margin: 0 11px 0 12px;
    padding-left: 8px;
    height: 16px;
    gap: 5px;
    border-radius: 8px;
    background-color: #f5f5f5;
}

.h-scroll i {
    width: 80%;
    height: 9px;
    margin-right: auto;
    border-radius: 5px;
    background-color: #6f6f6f;
}

/* status bar */
.status {
    display: flex;
    align-items: center;
    height: 22px;
    flex: none;
    background-color: #f4f4f4;
    overflow: hidden;
}

.access {
    gap: 3px;
    margin-left: 20px;
}

.views {
    display: flex;
    height: 22px;
    margin: 0 -6px 0 auto;
}

.views button {
    width: 40px;
}

.views .on {
    background-color: #dedede;
}

.zoom {
    padding: 3px 0 0 9px;
}

/* windows taskbar */
.taskbar {
    position: relative;
    display: flex;
    height: 30px;
    flex: none;
    overflow: hidden;
    background-color: #000;
    color: #fff;
}

.ghost {
    position: absolute;
    left: 29px;
    top: 0;
    width: 519px;
    height: 17px;
    padding: 0 15px;
    background-color: #242424;
    color: #0c0f14;
    line-height: 12px;
}

.ghost span {
    margin-right: 22px;
}

.ghost span:nth-child(2) {
    margin-right: 8px;
}

.apps {
    position: relative;
    display: flex;
    height: 40px;
}

.apps button {
    width: 49px;
}

.apps button:first-child {
    width: 36px;
    padding-right: 10px;
}

.tray {
    display: flex;
    align-items: center;
    gap: 10px;
    height: 40px;
    margin-left: auto;
    padding-right: 4px;
}

.weather {
    gap: 8px;
    margin-right: 13px;
    font-size: 13px;
}

.clock {
    padding-bottom: 3px;
    margin-right: 8px;
    text-align: center;
    line-height: 17px;
}

.watermark {
    position: absolute;
    right: 27px;
    bottom: 64px;
    color: rgba(150, 150, 150, 0.6);
    font-size: 14px;
    line-height: 18px;
    pointer-events: none;
}

.watermark p {
    margin: 0;
}

.watermark .big-mark {
    font-size: 19px;
    line-height: 26px;
}
```
